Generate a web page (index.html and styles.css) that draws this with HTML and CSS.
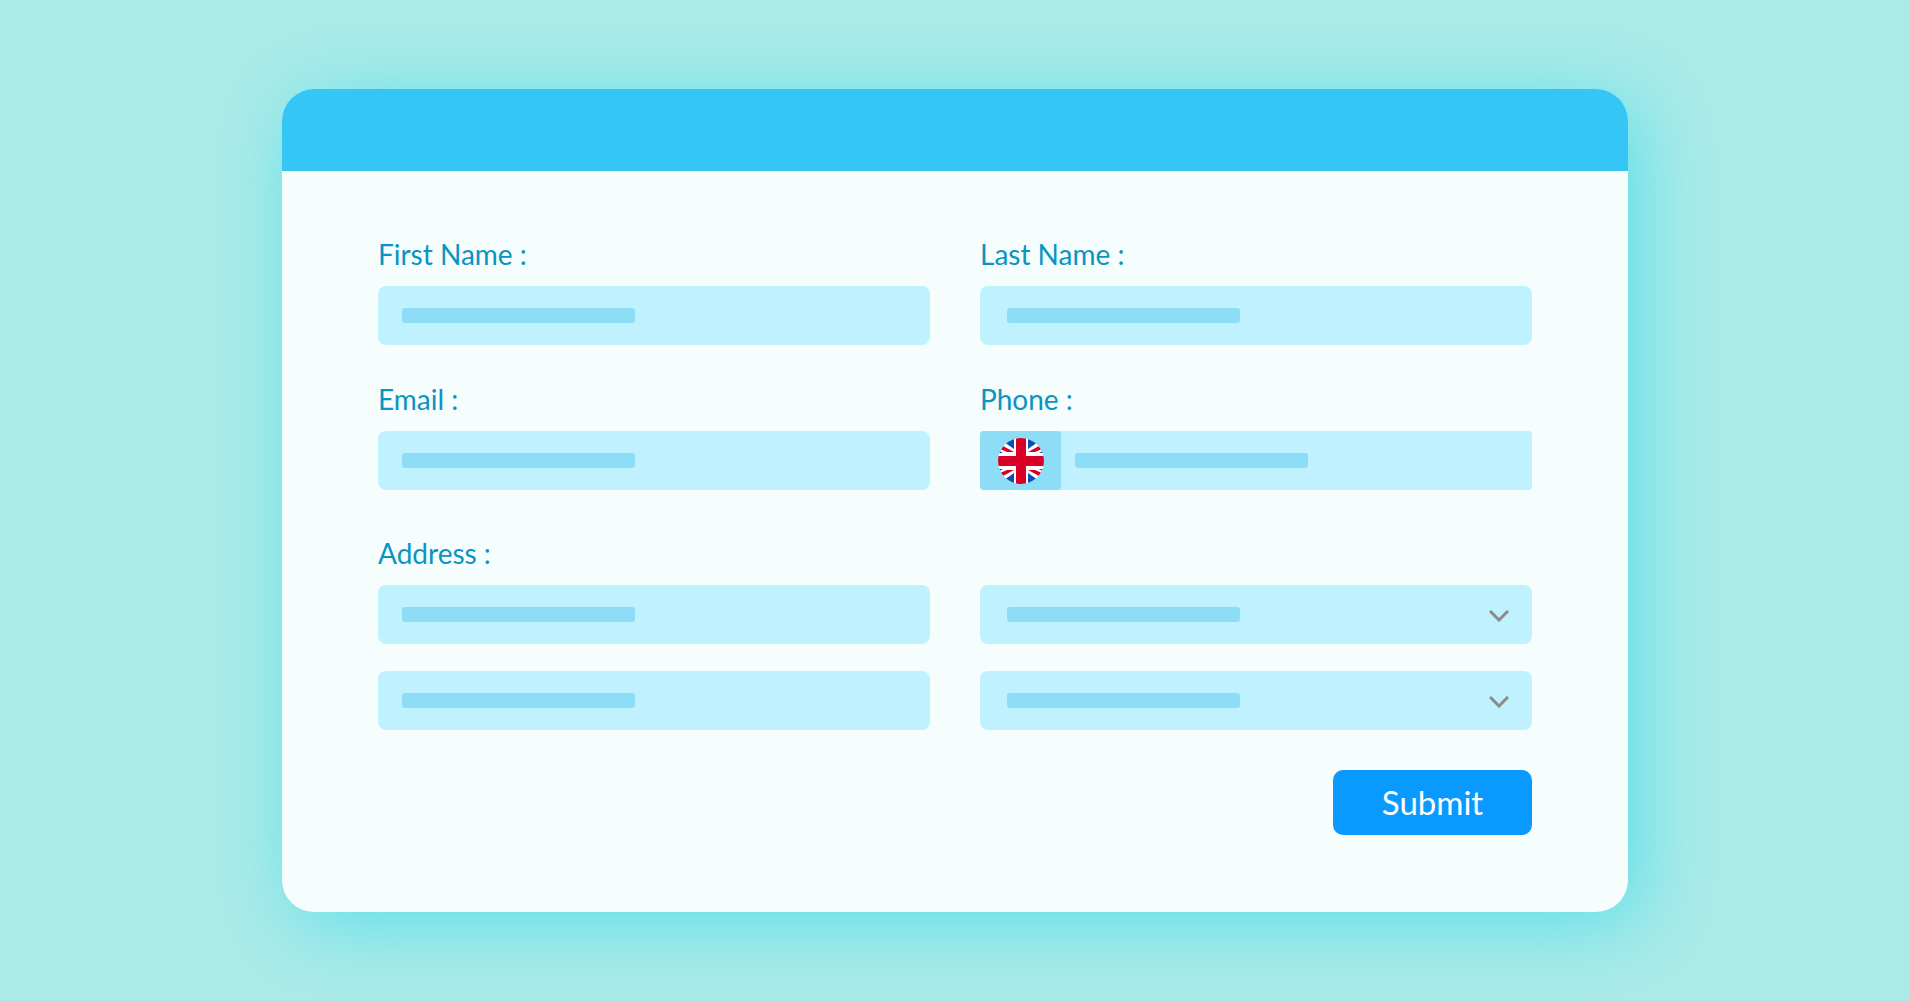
FILE: index.html
```html
<!DOCTYPE html>
<html lang="en">
<head>
    <meta charset="UTF-8">
    <meta name="viewport" content="width=device-width, initial-scale=1.0">
    <title>Contact Form</title>
    <link rel="stylesheet" href="styles.css">
</head>
<body>
    <main class="card">
        <header class="card-header"></header>

        <form class="form">
            <!-- Name -->
            <div class="row">
                <div class="group">
                    <label for="first-name">First Name :</label>
                    <div class="field">
                        <input type="text" id="first-name">
                        <span class="bar"></span>
                    </div>
                </div>
                <div class="group">
                    <label for="last-name">Last Name :</label>
                    <div class="field">
                        <input type="text" id="last-name">
                        <span class="bar bar-right"></span>
                    </div>
                </div>
            </div>

            <!-- Email and phone -->
            <div class="row contact-row">
                <div class="group">
                    <label for="email">Email :</label>
                    <div class="field">
                        <input type="email" id="email">
                        <span class="bar"></span>
                    </div>
                </div>
                <div class="group">
                    <label for="phone">Phone :</label>
                    <div class="phone">
                        <button type="button" class="country" aria-label="United Kingdom">
                            <svg class="flag" viewBox="0 0 46 46">
                                <clipPath id="circle"><circle cx="23" cy="23" r="23"/></clipPath>
                                <g clip-path="url(#circle)">
                                    <rect width="46" height="46" fill="#fff"/>
                                    <path fill="#0a50b0" d="M6 4L16 0v11zM40 4L30 0v11zM6 42l10 4V35zM40 42l-10 4V35z"/>
                                    <path fill="#0a50b0" d="M0 12l5 3H0zM46 12l-5 3h5zM0 34l5-3H0zM46 34l-5-3h5z"/>
                                    <path fill="#d80027" d="M5 8l11 6H9l-7-3zM41 8l-11 6h7l7-3zM5 38l11-6H9l-7 3zM41 38l-11-6h7l7 3z"/>
                                    <path fill="#d80027" d="M18 0h10v18h18v10H28v18H18V28H0V18h18z"/>
                                </g>
                            </svg>
                        </button>
                        <div class="field">
                            <input type="tel" id="phone">
                            <span class="bar bar-phone"></span>
                        </div>
                    </div>
                </div>
            </div>

            <!-- Address -->
            <div class="row address-row">
                <div class="group">
                    <label for="address">Address :</label>
                    <div class="field">
                        <input type="text" id="address">
                        <span class="bar"></span>
                    </div>
                </div>
                <div class="group">
                    <div class="field">
                        <select aria-label="City"><option></option></select>
                        <span class="bar bar-right"></span>
                        <svg class="arrow" viewBox="0 0 20 12"><path d="M1 1l9 9 9-9"/></svg>
                    </div>
                </div>
            </div>
            <div class="row second-row">
                <div class="field">
                    <input type="text" aria-label="Address line 2">
                    <span class="bar"></span>
                </div>
                <div class="field">
                    <select aria-label="Country"><option></option></select>
                    <span class="bar bar-right"></span>
                    <svg class="arrow" viewBox="0 0 20 12"><path d="M1 1l9 9 9-9"/></svg>
                </div>
            </div>

            <button type="submit" class="submit">Submit</button>
        </form>
    </main>
</body>
</html>
```

FILE: styles.css
```css
* {
    margin: 0;
    padding: 0;
    box-sizing: border-box;
    font-family: Lato, "Liberation Sans", sans-serif;
}

body {
    min-height: 100vh;
    display: flex;
    align-items: center;
    justify-content: center;
    background-color: #abeae9;
}

/* Card */
.card {
    width: 90%;
    max-width: 1346px;
    border-radius: 32px;
    overflow: hidden;
    background-color: #f6fdfd;
    box-shadow: 12px 12px 76px #5ddfe8;
}

.card-header {
    height: 82px;
    background-color: #35c6f6;
}

/* Form */
.form {
    display: flex;
    flex-direction: column;
    padding: 66px 96px 77px;
}

.row {
    display: flex;
    gap: 50px;
}

.contact-row {
    margin-top: 37px;
}

.address-row {
    margin-top: 46px;
    align-items: flex-end;
}

.second-row {
    margin-top: 27px;
}

.group {
    flex: 1;
}

label {
    display: block;
    margin-bottom: 15px;
    font-size: 28px;
    line-height: 34px;
    color: #0a94c2;
}

.field {
    position: relative;
    flex: 1;
}

input,
select {
    display: block;
    width: 100%;
    height: 59px;
    padding: 0 24px;
    border: none;
    border-radius: 8px;
    background-color: #bff1ff;
    color: #0a94c2;
    font-size: 24px;
    appearance: none;
}

/* Value strips inside the fields */
.bar {
    position: absolute;
    top: 22px;
    left: 24px;
    width: 233px;
    height: 15px;
    border-radius: 3px;
    background-color: #8dddf6;
    pointer-events: none;
}

.bar-right {
    left: 27px;
}

.bar-phone {
    left: 14px;
}

.arrow {
    position: absolute;
    top: 25px;
    right: 23px;
    width: 20px;
    height: 12px;
    fill: none;
    stroke: #8b8b8b;
    stroke-width: 3;
    pointer-events: none;
}

/* Phone */
.phone {
    display: flex;
    border-radius: 4px;
    background-color: #bff1ff;
}

.country {
    display: flex;
    align-items: center;
    justify-content: center;
    width: 81px;
    border: none;
    border-radius: 4px;
    background-color: #8dddf6;
    cursor: pointer;
}

.flag {
    width: 46px;
    height: 46px;
}

/* Submit */
.submit {
    align-self: flex-end;
    width: 199px;
    height: 65px;
    margin-top: 40px;
    padding-bottom: 2px;
    border: none;
    border-radius: 10px;
    background-color: #0a99ff;
    color: #fff;
    font-size: 33px;
    cursor: pointer;
}
```
